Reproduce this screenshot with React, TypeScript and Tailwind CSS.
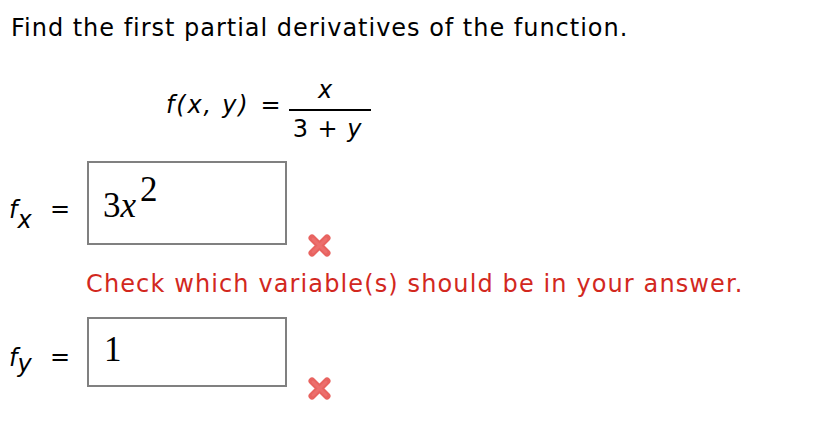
import React from "react";

function WrongMark({ className }: { className?: string }) {
  return (
    <svg width="27" height="27" viewBox="0 0 27 27" className={className}>
      <g strokeLinecap="round">
        <path d="M6 6 L21 21 M21 6 L6 21" stroke="#e6534f" strokeWidth="7" opacity="0.9" />
        <path d="M7 7 L20 20 M20 7 L7 20" stroke="#f07876" strokeWidth="3" opacity="0.6" />
      </g>
    </svg>
  );
}

function Label({ sub, subTop }: { sub: string; subTop: string }) {
  return (
    <div className="w-[87px] flex items-baseline pl-[9px]">
      <span className="italic relative top-[1px]">f</span>
      <span className={`italic relative ${subTop}`}>{sub}</span>
      <span className="ml-auto mr-[17px]">=</span>
    </div>
  );
}

export default function App() {
  return (
    <div className="w-[824px] h-[432px] bg-white text-black font-['DejaVu_Sans',sans-serif] text-[24px] leading-[28px]">
      <p className="pl-[11px] pt-[14px] tracking-[0.98px]">Find the first partial derivatives of the function.</p>

      {/* formula */}
      <div className="flex items-start mt-[34px] ml-[166px] tracking-[1px]">
        <span className="italic mt-[15px] tracking-[1.8px]">f(x, y)</span>
        <span className="mt-[15px] ml-[11px]">=</span>
        <div className="ml-[7px] flex flex-col items-stretch">
          <span className="italic text-center pr-[8px]">x</span>
          <div className="h-[2px] bg-black mt-[5px] mb-[4px] w-[82px]" />
          <span className="text-center pr-[4px] tracking-[1px]">
            3 + <span className="italic">y</span>
          </span>
        </div>
      </div>

      {/* f_x */}
      <div className="flex items-start mt-[18px]">
        <div className="pt-[34px]">
          <Label sub="x" subTop="top-[11px]" />
        </div>
        <div className="w-[200px] h-[84px] border-2 border-[#808080] pl-[14px] pt-[23px] font-['Liberation_Serif',serif] text-[35px] leading-[40px]">
          3<span className="italic">x</span>
          <span className="relative -top-[16px] ml-[4px]">2</span>
        </div>
        <WrongMark className="ml-[19px] mt-[71px]" />
      </div>

      <p className="pl-[86px] mt-[11px] text-[#d2281e] tracking-[1.12px]">Check which variable(s) should be in your answer.</p>

      {/* f_y */}
      <div className="flex items-start mt-[19px]">
        <div className="pt-[26px]">
          <Label sub="y" subTop="top-[7px]" />
        </div>
        <div className="w-[200px] h-[70px] border-2 border-[#808080] pl-[15px] pt-[11px] font-['Liberation_Serif',serif] text-[35px] leading-[40px]">
          1
        </div>
        <WrongMark className="ml-[19px] mt-[58px]" />
      </div>
    </div>
  );
}
